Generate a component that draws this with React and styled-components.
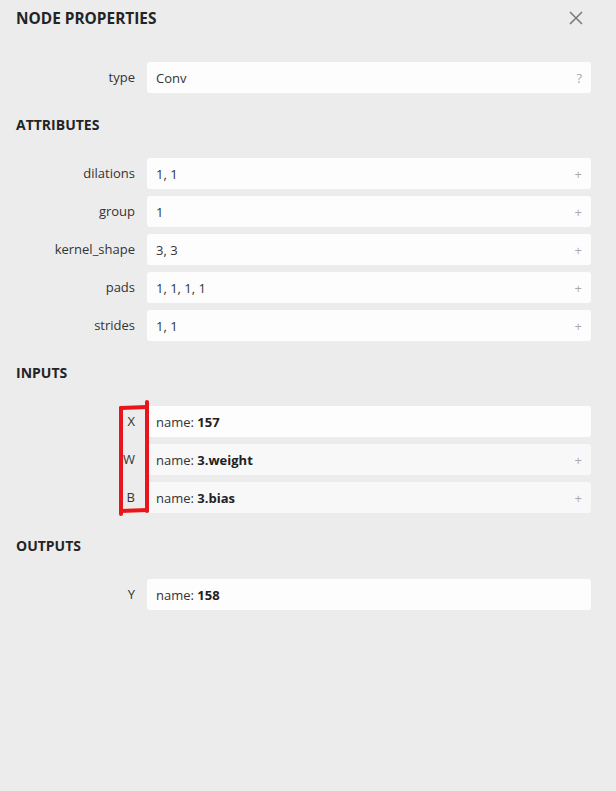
import React from "react";
import styled, { createGlobalStyle } from "styled-components";

const Global = createGlobalStyle`
  html, body { margin: 0; padding: 0; background: #ececec; }
  body { font-family: "Open Sans", "Noto Sans", sans-serif; color: #333; }
`;

const Panel = styled.div`
  width: 616px;
  min-height: 791px;
  background: #ececec;
  box-sizing: border-box;
  padding: 0 25px 0 16px;
  position: relative;
`;

const Header = styled.div`
  height: 36px;
  display: flex;
  align-items: center;
  justify-content: space-between;
`;

const Title = styled.div`
  font-size: 15.4px;
  font-weight: 700;
  color: #242424;
`;

const Close = styled.button`
  border: 0;
  background: transparent;
  padding: 0;
  margin-right: 8px;
  display: flex;
  width: 14px;
  height: 14px;
  cursor: pointer;
`;

const Section = styled.section`
  padding-top: ${(p) => p.$top ?? 23}px;
  display: flex;
  flex-direction: column;
`;

const Heading = styled.div`
  height: 20px;
  line-height: 20px;
  font-size: 14px;
  font-weight: 700;
  color: #242424;
  margin-bottom: 23px;
`;

const Rows = styled.div`
  display: flex;
  flex-direction: column;
  gap: 8px;
`;

const Row = styled.div`
  display: grid;
  grid-template-columns: 119px 1fr;
  column-gap: 12px;
  height: 30px;
`;

const Label = styled.div`
  font-size: 13px;
  color: #333;
  text-align: right;
  line-height: 31px;
  white-space: nowrap;
`;

const Value = styled.div`
  background: ${(p) => (p.$muted ? "#f8f8f8" : "#fdfdfd")};
  border-radius: 3px;
  display: flex;
  align-items: center;
  justify-content: space-between;
  padding: 1px 9px 0 9px;
  font-size: 13px;
  color: #333;
`;

const Bold = styled.b`
  font-weight: 700;
  color: #222;
`;

const Action = styled.span`
  color: #aaa;
  font-size: 13px;
`;

const Annotation = styled.svg`
  position: absolute;
  left: 0;
  top: 0;
  pointer-events: none;
`;

const attributes = [
  ["dilations", "1, 1"],
  ["group", "1"],
  ["kernel_shape", "3, 3"],
  ["pads", "1, 1, 1, 1"],
  ["strides", "1, 1"],
];

const inputs = [
  ["X", "157", false, false],
  ["W", "3.weight", true, true],
  ["B", "3.bias", true, true],
];

export default function App() {
  return (
    <>
      <Global />
      <Panel>
        <Header>
          <Title>NODE PROPERTIES</Title>
          <Close aria-label="close">
            <svg width="14" height="14" viewBox="0 0 14 14">
              <path d="M1 1L13 13M13 1L1 13" stroke="#7a7a7a" strokeWidth="1.6" />
            </svg>
          </Close>
        </Header>

        <Section $top={26}>
          <Rows>
            <Row>
              <Label>type</Label>
              <Value>
                <span>Conv</span>
                <Action>?</Action>
              </Value>
            </Row>
          </Rows>
        </Section>

        <Section>
          <Heading>ATTRIBUTES</Heading>
          <Rows>
            {attributes.map(([k, v]) => (
              <Row key={k}>
                <Label>{k}</Label>
                <Value>
                  <span>{v}</span>
                  <Action>+</Action>
                </Value>
              </Row>
            ))}
          </Rows>
        </Section>

        <Section>
          <Heading>INPUTS</Heading>
          <Rows>
            {inputs.map(([k, v, muted, plus]) => (
              <Row key={k}>
                <Label>{k}</Label>
                <Value $muted={muted}>
                  <span>
                    name: <Bold>{v}</Bold>
                  </span>
                  {plus && <Action>+</Action>}
                </Value>
              </Row>
            ))}
          </Rows>
        </Section>

        <Section $top={24}>
          <Heading>OUTPUTS</Heading>
          <Rows>
            <Row>
              <Label>Y</Label>
              <Value>
                <span>
                  name: <Bold>158</Bold>
                </span>
              </Value>
            </Row>
          </Rows>
        </Section>

        <Annotation width="616" height="791">
          <g stroke="#e8161c" strokeWidth="4" strokeLinecap="round" fill="none">
            <path d="M121 408 L147 407" />
            <path d="M121 408 L121 514" />
            <path d="M147 402 L147 511" />
            <path d="M121 511 L147 510" />
          </g>
        </Annotation>
      </Panel>
    </>
  );
}
